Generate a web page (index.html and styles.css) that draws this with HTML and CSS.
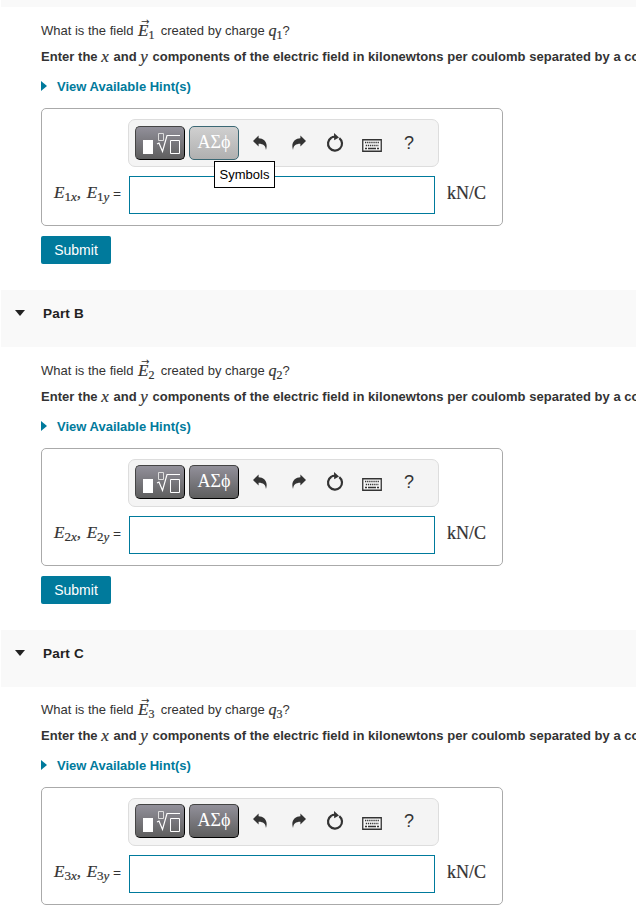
FILE: index.html
```html
<!DOCTYPE html>
<html lang="en">
<head>
<meta charset="utf-8">
<title>Electric field problem</title>
<link rel="stylesheet" href="styles.css">
</head>
<body>
<svg class="defs" aria-hidden="true">
  <symbol id="root" viewBox="0 0 50 34">
    <path d="M8 13h10v14H8z" fill="#fff"/>
    <path d="M23.500 6.500h5v7h-5z" fill="none" stroke="#ddd"/>
    <path d="M22 17l2-1 3.500 8.500L32 8.500h13" fill="none" stroke="#fff" stroke-width="1.200"/>
    <path d="M35.500 13.500h9v13h-9z" fill="none" stroke="#fff"/>
  </symbol>
  <symbol id="undo" viewBox="0 0 16 16"><path d="M1 6.400L6.600 1v2.800C12 4 16.400 8 14 15.500 13.400 11 11.500 9.400 6.600 9.300V12z"/></symbol>
  <symbol id="reset" viewBox="0 0 18 20"><path d="M5.300 4.700A7 7 0 1 0 13.300 5.100" fill="none" stroke="#333" stroke-width="2.200"/><path d="M8 0l5 4.400L8.200 7.200z"/><path d="M5 5q2-1.600 5-1" fill="none" stroke="#333" stroke-width="2"/></symbol>
  <symbol id="keyboard" viewBox="0 0 20 13"><path d="M.75.75h18.500v11.500H.75z" fill="#f8f8f8" stroke="#333" stroke-width="1.300"/><path d="M3 3.500h14M3.800 6.500h13" fill="none" stroke="#333" stroke-width="1.500" stroke-dasharray="1.300 .8"/><path d="M3 9.500h2m1 0h8m1 0h2" fill="none" stroke="#333" stroke-width="1.300"/></symbol>
</svg>

<header class="part part-top"></header>
<section class="content first">
  <p class="line">What is the field <span class="math vec"><i>E</i><sub>1</sub></span> created by charge <span class="math q"><i>q</i><sub>1</sub></span>?</p>
  <p class="line strong">Enter the <i class="math var">x</i> and <i class="math var">y</i> components of the electric field in kilonewtons per coulomb separated by a co</p>
  <a class="line hint"><span class="tri"></span>View Available Hint(s)</a>
  <div class="answer">
    <div class="toolbar">
      <button class="tool"><svg><use href="#root"/></svg></button><button class="tool active">ΑΣϕ</button>
      <svg class="icon undo"><use href="#undo"/></svg><svg class="icon redo"><use href="#undo"/></svg><svg class="icon reset"><use href="#reset"/></svg><svg class="icon keyboard"><use href="#keyboard"/></svg><span class="help">?</span>
      <span class="tooltip">Symbols</span>
    </div>
    <div class="entry"><label class="math"><i>E</i><sub>1<i>x</i></sub><span class="comma">,</span><i>E</i><sub>1<i>y</i></sub><span class="eq">=</span></label><div class="field"></div><span class="math unit">kN/C</span></div>
  </div>
  <button class="submit">Submit</button>
</section>

<header class="part"><span class="caret"></span><h2>Part B</h2></header>
<section class="content">
  <p class="line">What is the field <span class="math vec"><i>E</i><sub>2</sub></span> created by charge <span class="math q"><i>q</i><sub>2</sub></span>?</p>
  <p class="line strong">Enter the <i class="math var">x</i> and <i class="math var">y</i> components of the electric field in kilonewtons per coulomb separated by a co</p>
  <a class="line hint"><span class="tri"></span>View Available Hint(s)</a>
  <div class="answer">
    <div class="toolbar">
      <button class="tool"><svg><use href="#root"/></svg></button><button class="tool">ΑΣϕ</button>
      <svg class="icon undo"><use href="#undo"/></svg><svg class="icon redo"><use href="#undo"/></svg><svg class="icon reset"><use href="#reset"/></svg><svg class="icon keyboard"><use href="#keyboard"/></svg><span class="help">?</span>
    </div>
    <div class="entry"><label class="math"><i>E</i><sub>2<i>x</i></sub><span class="comma">,</span><i>E</i><sub>2<i>y</i></sub><span class="eq">=</span></label><div class="field"></div><span class="math unit">kN/C</span></div>
  </div>
  <button class="submit">Submit</button>
</section>

<header class="part"><span class="caret"></span><h2>Part C</h2></header>
<section class="content last">
  <p class="line">What is the field <span class="math vec"><i>E</i><sub>3</sub></span> created by charge <span class="math q"><i>q</i><sub>3</sub></span>?</p>
  <p class="line strong">Enter the <i class="math var">x</i> and <i class="math var">y</i> components of the electric field in kilonewtons per coulomb separated by a co</p>
  <a class="line hint"><span class="tri"></span>View Available Hint(s)</a>
  <div class="answer">
    <div class="toolbar">
      <button class="tool"><svg><use href="#root"/></svg></button><button class="tool">ΑΣϕ</button>
      <svg class="icon undo"><use href="#undo"/></svg><svg class="icon redo"><use href="#undo"/></svg><svg class="icon reset"><use href="#reset"/></svg><svg class="icon keyboard"><use href="#keyboard"/></svg><span class="help">?</span>
    </div>
    <div class="entry"><label class="math"><i>E</i><sub>3<i>x</i></sub><span class="comma">,</span><i>E</i><sub>3<i>y</i></sub><span class="eq">=</span></label><div class="field"></div><span class="math unit">kN/C</span></div>
  </div>
</section>
</body>
</html>
```
FILE: styles.css
```css
* { box-sizing: border-box; }
body { margin: 0; background: #fff; color: #333; font: 13px "Liberation Sans", Arial, sans-serif; }
.defs { display: none; }
.part { display: flex; height: 57px; margin-left: 1px; padding: 0 0 11px 14px; align-items: center; background: #f9f9f9; }
.part-top { height: 7px; padding: 0; }
.part h2 { margin: 0 0 0 18px; color: #222; font-size: 13.500px; letter-spacing: .2px; }
.caret { border: 5px solid transparent; border-top: 6px solid #222; border-bottom: 0; }
.content { height: 283px; padding: 10px 0 0 41px; }
.last { height: 218px; padding-top: 9px; }
.line { display: flex; height: 26px; margin: 0; align-items: center; white-space: pre; line-height: 26px; padding-top: 1px; }
.strong { font-weight: bold; letter-spacing: .03px; }
.math { color: #333; font-family: "Liberation Serif", serif; font-weight: normal; letter-spacing: 0; -webkit-text-stroke: .2px #333; }
.math sub { position: relative; top: 3px; vertical-align: baseline; font-size: 12px; line-height: 0; }
.vec { position: relative; width: 18px; margin: 0 1px; font-size: 17px; }
.vec::before { content: "→"; position: absolute; top: -9px; left: 3px; font: 10px "DejaVu Sans", sans-serif; line-height: 26px; -webkit-text-stroke: 0; }
.q { width: 14px; font-size: 16px; }
.var { width: 9px; margin-right: 1px; font-size: 17px; }
.hint { margin-top: 4px; color: #007a9c; font-weight: bold; }
.tri { margin: -1px 10px 0 0; border: 5.500px solid transparent; border-left: 6px solid #007a9c; border-right: 0; }
.answer { width: 462px; height: 118px; margin-top: 9px; padding-top: 10px; border: 1px solid #aaa; border-radius: 5px; }
.toolbar { position: relative; display: flex; width: 311px; height: 48px; margin-left: 86px; padding: 5px 6px; border: 1px solid #ddd; border-radius: 7px; background: #f4f4f4; }
.first .toolbar { padding-top: 6px; }
.tool { width: 50px; height: 34px; margin-right: 4px; padding: 0 0 1px; border: 1px solid; border-color: #444 #000 #000 #444; border-radius: 5px; background: linear-gradient(#92909a, #5e5e5e); color: #fff; font: 18px "Liberation Serif", serif; }
.tool svg { display: block; width: 50px; height: 34px; margin: 0 -1px; }
.tool.active { border-color: #3b6874; background: linear-gradient(#d0d0d0, #b0b0b0); }
.icon { fill: #333; flex: none; }
.undo, .redo { width: 16px; height: 17px; margin-top: 8px; }
.undo { margin-left: 9px; }
.redo { margin-left: 23px; transform: scaleX(-1); }
.reset { width: 18px; height: 20px; margin: 7px 0 0 19px; }
.keyboard { width: 20px; height: 13px; margin: 13px 0 0 18px; }
.help { width: 16px; margin-left: 19px; text-align: center; font: 18px/34px "Liberation Sans", sans-serif; }
.tooltip { position: absolute; top: 41px; left: 85px; width: 61px; height: 27px; border: 1px solid #000; background: #fff; color: #000; font-size: 13px; line-height: 25px; text-align: center; z-index: 1; }
.entry { display: flex; align-items: center; height: 38px; margin-top: 9px; }
.entry label { display: flex; width: 87px; padding: 0 0 4px 12px; font-size: 17px; align-items: center; white-space: nowrap; }
.entry sub { font-size: 13px; top: 4px; }
.comma { width: 10px; }
.eq { margin-left: 4px; font: 13px "Liberation Sans", sans-serif; }
.field { width: 306px; height: 38px; border: 1px solid #007a9c; background: #fff; }
.unit { margin-left: 12px; padding-bottom: 3px; font-size: 18px; }
.submit { display: block; width: 70px; height: 28px; margin-top: 10px; padding: 0; border: 0; border-radius: 2px; background: #007a9c; color: #fff; font: 14px "Liberation Sans", sans-serif; }
```
